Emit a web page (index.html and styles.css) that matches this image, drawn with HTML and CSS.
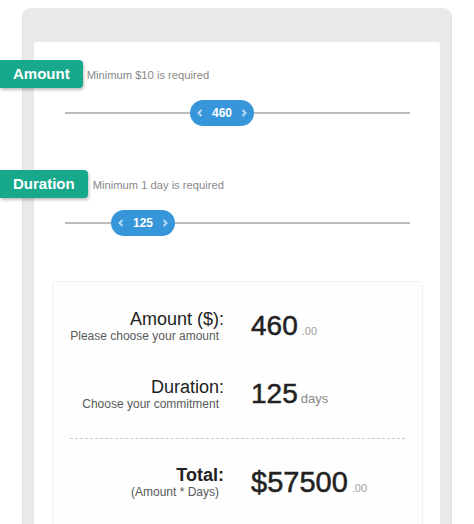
FILE: index.html
```html
<!DOCTYPE html>
<html>
<head>
<meta charset="utf-8">
<link rel="stylesheet" href="styles.css">
</head>
<body>
<div class="panel">
  <div class="card">
    <div class="field">
      <div class="field-head">
        <span class="badge">Amount</span>
        <span class="hint">Minimum $10 is required</span>
      </div>
      <div class="slider">
        <div class="track"></div>
        <div class="handle" style="left: 125px;">
          <svg class="chev" width="6" height="8" viewBox="0 0 6 8"><path d="M4.5 1 L1.5 4 L4.5 7" fill="none" stroke="currentColor" stroke-width="2"/></svg>
          <span class="hval">460</span>
          <svg class="chev" width="6" height="8" viewBox="0 0 6 8"><path d="M1.5 1 L4.5 4 L1.5 7" fill="none" stroke="currentColor" stroke-width="2"/></svg>
        </div>
      </div>
    </div>
    <div class="field">
      <div class="field-head">
        <span class="badge">Duration</span>
        <span class="hint">Minimum 1 day is required</span>
      </div>
      <div class="slider">
        <div class="track"></div>
        <div class="handle" style="left: 46px;">
          <svg class="chev" width="6" height="8" viewBox="0 0 6 8"><path d="M4.5 1 L1.5 4 L4.5 7" fill="none" stroke="currentColor" stroke-width="2"/></svg>
          <span class="hval">125</span>
          <svg class="chev" width="6" height="8" viewBox="0 0 6 8"><path d="M1.5 1 L4.5 4 L1.5 7" fill="none" stroke="currentColor" stroke-width="2"/></svg>
        </div>
      </div>
    </div>
    <div class="summary">
      <div class="row">
        <div class="label">
          <div class="ltitle">Amount ($):</div>
          <div class="lsub">Please choose your amount</div>
        </div>
        <div class="value"><span class="big">460</span><span class="unit">.00</span></div>
      </div>
      <div class="row">
        <div class="label">
          <div class="ltitle">Duration:</div>
          <div class="lsub">Choose your commitment</div>
        </div>
        <div class="value"><span class="big">125</span><span class="unit days">days</span></div>
      </div>
      <div class="divider"></div>
      <div class="row">
        <div class="label">
          <div class="ltitle strong">Total:</div>
          <div class="lsub">(Amount * Days)</div>
        </div>
        <div class="value"><span class="big huge">$57500</span><span class="unit">.00</span></div>
      </div>
    </div>
  </div>
</div>
</body>
</html>
```

FILE: styles.css
```css
html, body {
  margin: 0;
  padding: 0;
  background: #ffffff;
}
body {
  font-family: "Liberation Sans", Arial, sans-serif;
  color: #333;
  height: 524px;
  overflow: hidden;
}
.panel {
  margin: 8px 0 0 22px;
  width: 430px;
  height: 560px;
  box-sizing: border-box;
  background: #e9e9e9;
  border-left: 1px solid #e0e0e0;
  border-right: 1px solid #e0e0e0;
  border-radius: 9px 9px 0 0;
  padding: 34px 11px 0 11px;
}
.card {
  background: #fff;
  border-radius: 3px;
  height: 600px;
  padding-top: 18px;
  box-sizing: border-box;
}
.field {
  display: flex;
  flex-direction: column;
}
.field + .field {
  margin-top: 44px;
}
.field-head {
  display: flex;
  align-items: center;
  margin-left: -34px;
  height: 28px;
}
.badge {
  background: #18a98d;
  color: #fff;
  font-weight: bold;
  font-size: 15px;
  height: 28px;
  line-height: 28px;
  padding: 0 13px 0 13px;
  border-radius: 0 4px 4px 0;
  box-shadow: 1px 2px 3px rgba(0,0,0,0.25);
}
.hint {
  font-size: 11.2px;
  color: #888;
  margin-left: 4px;
  margin-top: 2px;
}
.field + .field .hint {
  margin-left: 5px;
}
.slider {
  position: relative;
  margin: 12px 30px 0 31px;
  height: 26px;
  display: flex;
  align-items: center;
}
.track {
  flex: 1;
  height: 2px;
  background: #bcbcbc;
}
.handle {
  position: absolute;
  top: 0;
  width: 64px;
  height: 26px;
  border-radius: 13px;
  background: #3796da;
  display: flex;
  align-items: center;
  justify-content: center;
  gap: 9px;
  color: #fff;
}
.chev {
  color: rgba(255,255,255,0.65);
}
.hval {
  font-weight: bold;
  font-size: 12px;
}
.summary {
  margin: 45px 17px 0 18px;
  border: 1px solid #f1f1f1;
  border-radius: 3px;
  background: #fefefe;
  padding-top: 27px;
  height: 400px;
}
.row {
  display: flex;
  align-items: center;
}
.row + .row {
  margin-top: 34px;
}
.label {
  width: 171px;
  text-align: right;
}
.ltitle {
  font-size: 18px;
  line-height: 20px;
  color: #222;
}
.ltitle.strong {
  font-weight: bold;
}
.lsub {
  font-size: 12px;
  line-height: 14px;
  color: #5a5a5a;
  padding-right: 5px;
}
.value {
  margin-left: 27px;
  display: flex;
  align-items: baseline;
}
.big {
  font-size: 28px;
  color: #222;
  -webkit-text-stroke: 0.5px #222;
}
.big.huge {
  font-size: 29px;
}
.unit {
  font-size: 11px;
  color: #a0a0a0;
  margin-left: 4px;
}
.unit.days {
  font-size: 13px;
  margin-left: 3px;
  color: #888;
}
.divider {
  margin: 27px 17px 26px 17px;
  border-top: 1px dashed #c8c8c8;
}
.divider + .row {
  margin-top: 0;
}
```
